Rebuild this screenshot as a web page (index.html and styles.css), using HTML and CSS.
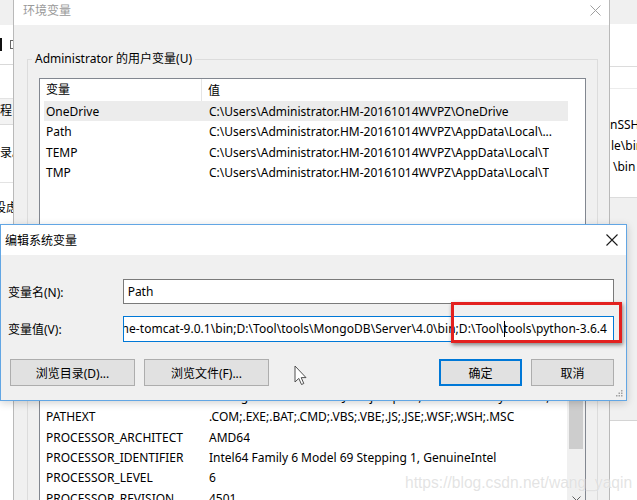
FILE: index.html
```html
<!DOCTYPE html>
<html>
<head>
<meta charset="utf-8">
<link rel="stylesheet" href="styles.css">
</head>
<body>

<!-- window behind, left edge -->
<div class="back-left">
  <div class="bl-title"></div>
  <div class="bl-tool"><span class="bar"></span><span class="box"></span></div>
  <div class="bl-gap"></div>
  <div class="bl-sel">程</div>
  <div class="bl-row">录。</div>
  <div class="bl-row cut">设虑</div>
</div>

<!-- window behind, right edge -->
<div class="back-right">
  <div class="br-title"></div>
  <div class="br-top"></div>
  <div class="br-head"></div>
  <div class="br-list">
    <div class="br-item n1">nSSH\</div>
    <div class="br-item n2">le\bin</div>
    <div class="br-item n3">\bin</div>
  </div>
  <div class="br-foot"></div>
  <div class="br-low"></div>
</div>

<!-- 环境变量 -->
<div class="envwin">
  <div class="win-title">
    <span class="title-text">环境变量</span>
    <svg class="close-x" width="11" height="11" viewBox="0 0 11 11"><path d="M0.5 0.5 L10.5 10.5 M10.5 0.5 L0.5 10.5" stroke="#a0a0a0" stroke-width="1" fill="none"/></svg>
  </div>
  <div class="win-body">
    <fieldset class="group">
      <legend>Administrator 的用户变量(U)</legend>
      <div class="list user-list">
        <div class="list-head"><span class="c1">变量</span><span class="c2">值</span></div>
        <div class="row sel"><span class="c1">OneDrive</span><span class="c2">C:\Users\Administrator.HM-20161014WVPZ\OneDrive</span></div>
        <div class="row"><span class="c1">Path</span><span class="c2">C:\Users\Administrator.HM-20161014WVPZ\AppData\Local\...</span></div>
        <div class="row"><span class="c1">TEMP</span><span class="c2">C:\Users\Administrator.HM-20161014WVPZ\AppData\Local\T</span></div>
        <div class="row"><span class="c1">TMP</span><span class="c2">C:\Users\Administrator.HM-20161014WVPZ\AppData\Local\T</span></div>
      </div>
      <div class="group-btns"></div>
    </fieldset>

    <fieldset class="group sys">
      <legend>系统变量(S)</legend>
      <div class="list sys-list">
        <div class="list-head"><span class="c1">变量</span><span class="c2">值</span></div>
        <div class="list-main">
          <div class="rows">
            <div class="row"><span class="c1">NUMBER_OF_PROCESSORS</span><span class="c2">4</span></div>
            <div class="row"><span class="c1">OS</span><span class="c2">Windows_NT</span></div>
            <div class="row"><span class="c1">Path</span><span class="c2">C:\ProgramData\Oracle\Java\javapath;C:\Windows\system32;C:\...</span></div>
            <div class="row"><span class="c1">PATHEXT</span><span class="c2">.COM;.EXE;.BAT;.CMD;.VBS;.VBE;.JS;.JSE;.WSF;.WSH;.MSC</span></div>
            <div class="row"><span class="c1">PROCESSOR_ARCHITECT</span><span class="c2">AMD64</span></div>
            <div class="row"><span class="c1">PROCESSOR_IDENTIFIER</span><span class="c2">Intel64 Family 6 Model 69 Stepping 1, GenuineIntel</span></div>
            <div class="row"><span class="c1">PROCESSOR_LEVEL</span><span class="c2">6</span></div>
            <div class="row"><span class="c1">PROCESSOR_REVISION</span><span class="c2">4501</span></div>
          </div>
          <div class="vscroll">
            <div class="thumb"></div>
            <svg class="arrow-down" width="9" height="6" viewBox="0 0 9 6"><path d="M0.5 0.5 L4.5 4.5 L8.5 0.5" stroke="#606060" fill="none"/></svg>
          </div>
        </div>
      </div>
    </fieldset>
  </div>
</div>

<!-- 编辑系统变量 -->
<div class="dialog">
  <div class="dlg-title">
    <span>编辑系统变量</span>
    <svg class="close-x" width="12" height="12" viewBox="0 0 12 12"><path d="M0.5 0.5 L11.5 11.5 M11.5 0.5 L0.5 11.5" stroke="#1a1a1a" stroke-width="1.1" fill="none"/></svg>
  </div>
  <div class="dlg-body">
    <div class="field">
      <label>变量名(N):</label>
      <div class="input">Path</div>
    </div>
    <div class="field">
      <label>变量值(V):</label>
      <div class="input value"><span>C:\ProgramData\Oracle\Java\javapath;C:\Program Files\apache-tomcat-9.0.1\bin;D:\Tool\tools\MongoDB\Server\4.0\bin;D:\Tool\<span class="caret"></span>tools\python-3.6.4</span></div>
    </div>
    <div class="btn-row">
      <button class="btn wide">浏览目录(D)...</button>
      <button class="btn wide">浏览文件(F)...</button>
      <span class="spacer"></span>
      <button class="btn default">确定</button>
      <button class="btn last">取消</button>
    </div>
  </div>
  <svg class="grip" width="7" height="7" viewBox="0 0 7 7">
    <rect x="5" y="0" width="1.5" height="1.5" fill="#a0a0a0"/>
    <rect x="2.5" y="2.5" width="1.5" height="1.5" fill="#a0a0a0"/>
    <rect x="5" y="2.5" width="1.5" height="1.5" fill="#a0a0a0"/>
    <rect x="0" y="5" width="1.5" height="1.5" fill="#a0a0a0"/>
    <rect x="2.5" y="5" width="1.5" height="1.5" fill="#a0a0a0"/>
    <rect x="5" y="5" width="1.5" height="1.5" fill="#a0a0a0"/>
  </svg>
</div>

<div class="mark-box"></div>

<svg class="pointer" width="13" height="21" viewBox="0 0 13 21">
  <path d="M1 1 L1 17 L4.8 13.4 L7.5 19.5 L9.8 18.5 L7.2 12.6 L12 12.6 Z" fill="#fff" stroke="#505050" stroke-width="1" stroke-linejoin="round"/>
</svg>

<div class="watermark">https://blog.csdn.net/wang_yaqin</div>

</body>
</html>
```

FILE: styles.css
```css
* {
  box-sizing: border-box;
}
body {
  margin: 0;
  width: 637px;
  height: 500px;
  overflow: hidden;
  position: relative;
  background: #fff;
  font-family: "Noto Sans", "Noto Sans CJK SC", sans-serif;
  font-size: 12px;
  color: #000;
}

/* windows behind */
.back-left {
  position: absolute;
  left: 0;
  top: 0;
  width: 14px;
  height: 500px;
  overflow: hidden;
  background: #fff;
}
.bl-title {
  height: 25px;
  background: #f0f0f0;
}
.bl-tool {
  height: 40px;
  display: flex;
  align-items: center;
  border-bottom: 1px solid #d9d9d9;
}
.bl-tool .bar {
  width: 2px;
  height: 13px;
  background: #111;
}
.bl-tool .box {
  width: 5px;
  height: 9px;
  margin-left: 8px;
  border: 1px solid #666;
}
.bl-gap {
  height: 34px;
  border-bottom: 1px solid #e3e3e3;
}
.bl-sel {
  height: 26px;
  line-height: 24px;
  background: #f3f3f3;
  border-bottom: 1px solid #dcdcdc;
  white-space: nowrap;
}
.bl-row {
  height: 58px;
  line-height: 56px;
  border-bottom: 1px solid #e3e3e3;
  white-space: nowrap;
}
.bl-row.cut {
  text-indent: -6px;
  line-height: 50px;
}

.back-right {
  position: absolute;
  left: 610px;
  top: 0;
  width: 27px;
  height: 500px;
  overflow: hidden;
  background: #fff;
}
.br-title {
  height: 24px;
  background: #f0f0f0;
}
.br-top {
  height: 43px;
  border-bottom: 1px solid #dcdcdc;
}
.br-head {
  height: 22px;
  border-bottom: 1px solid #ececec;
}
.br-list {
  height: 108px;
  padding-top: 25px;
  margin-left: 2px;
}
.br-item {
  height: 21px;
  line-height: 21px;
  white-space: nowrap;
}
.br-item.n1 { text-indent: -2px; }
.br-item.n2 { text-indent: -1px; }
.br-item.n3 { text-indent: 1px; }
.br-foot {
  height: 223px;
  background: #f0f0f0;
  border-top: 1px solid #dcdcdc;
}
.br-low {
  border-top: 1px solid #d4d4d4;
  height: 80px;
}

/* 环境变量 window */
.envwin {
  position: absolute;
  left: 13px;
  top: -6px;
  width: 597px;
  height: 530px;
  border: 1px solid #b9b9b9;
  background: #f0f0f0;
}
.win-title {
  height: 30px;
  background: #fff;
  display: flex;
  align-items: center;
  justify-content: space-between;
  padding: 0 8px 0 9px;
}
.title-text {
  color: #9a9a9a;
  font-size: 12px;
}
.win-body {
  padding: 26px 11px 0 13px;
}
.group {
  margin: 0;
  padding: 11px 11px 10px 11px;
  border: 1px solid #dcdcdc;
  min-width: 0;
}
.group legend {
  padding: 0 3px;
  margin-left: -7px;
  line-height: 16px;
}
.list {
  background: #fff;
  border: 1px solid #828790;
}
.user-list {
  height: 168px;
}
.group-btns {
  height: 32px;
}
.group.sys {
  margin-top: 6px;
  padding-top: 11px;
}
.sys-list {
  height: 187px;
}
.list-head {
  display: flex;
  height: 22px;
  align-items: center;
  padding-left: 4px;
  width: 528px;
}
.list-head .c1 {
  width: 158px;
  height: 22px;
  line-height: 22px;
  padding-left: 2px;
  border-right: 1px solid #e5e5e5;
}
.list-head .c2 {
  padding-left: 6px;
}
.row {
  display: flex;
  height: 20.4px;
  line-height: 21px;
  margin-left: 4px;
  width: 524px;
  white-space: nowrap;
}
.row.sel {
  background: #ececec;
}
.row .c1 {
  width: 163px;
  padding-left: 2px;
  overflow: hidden;
}
.row .c2 {
  padding-left: 2px;
  overflow: hidden;
}
.list-main {
  display: flex;
  height: 163px;
}
.rows {
  width: 528px;
  overflow: hidden;
}
.vscroll {
  width: 18px;
  background: #f0f0f0;
  display: flex;
  flex-direction: column;
  align-items: center;
  padding-top: 21px;
}
.thumb {
  width: 14px;
  height: 83px;
  background: #cdcdcd;
}
.arrow-down {
  margin-top: auto;
  margin-bottom: 6px;
}

/* 编辑系统变量 dialog */
.dialog {
  position: absolute;
  left: 0;
  top: 224px;
  width: 627px;
  height: 177px;
  border: 1px solid #62a6e4;
  background: #f0f0f0;
  box-shadow: 0 2px 8px rgba(0, 0, 0, 0.18);
}
.dlg-title {
  height: 30px;
  background: #fff;
  display: flex;
  align-items: center;
  justify-content: space-between;
  padding: 0 8px 0 4px;
}
.dlg-body {
  padding: 24px 12px 0 7px;
}
.field {
  display: flex;
  align-items: center;
  margin-bottom: 12px;
}
.field label {
  width: 115px;
}
.input {
  width: 493px;
  height: 25px;
  line-height: 23px;
  background: #fff;
  border: 1px solid #7a7a7a;
  padding-left: 4px;
  white-space: nowrap;
}
.input.value {
  height: 26px;
  line-height: 24px;
  border-color: #0078d7;
  display: flex;
  justify-content: flex-end;
  overflow: hidden;
  padding: 0 6px 0 0;
  letter-spacing: 0.04px;
}
.caret {
  display: inline-block;
  width: 1px;
  height: 16px;
  background: #000;
  vertical-align: -4px;
  margin-right: -1px;
}
.btn-row {
  display: flex;
  margin-top: 17px;
  padding-left: 2px;
}
.btn {
  height: 27px;
  width: 83px;
  margin-right: 9px;
  padding: 0;
  font: inherit;
  color: #000;
  background: #e1e1e1;
  border: 1px solid #adadad;
}
.btn.wide {
  width: 125px;
  margin-right: 9px;
}
.btn.last {
  margin-right: 0;
}
.btn.default {
  border-color: #0078d7;
  box-shadow: inset 0 0 0 1px #0078d7;
}
.spacer {
  flex: 1;
}
.grip {
  position: absolute;
  right: 3px;
  bottom: 3px;
}

/* red marker over the value */
.mark-box {
  position: absolute;
  left: 451px;
  top: 302px;
  width: 171px;
  height: 41px;
  border: 3px solid #e3211f;
  box-shadow: 1px 2px 4px rgba(0, 0, 0, 0.45);
}
.pointer {
  position: absolute;
  left: 294px;
  top: 365px;
}
.watermark {
  position: absolute;
  left: 405px;
  top: 474px;
  font-family: "Liberation Sans", sans-serif;
  font-size: 15.6px;
  color: rgba(200, 200, 200, 0.5);
  text-shadow: 0 0 1px rgba(255, 255, 255, 0.8);
  white-space: nowrap;
}
```
